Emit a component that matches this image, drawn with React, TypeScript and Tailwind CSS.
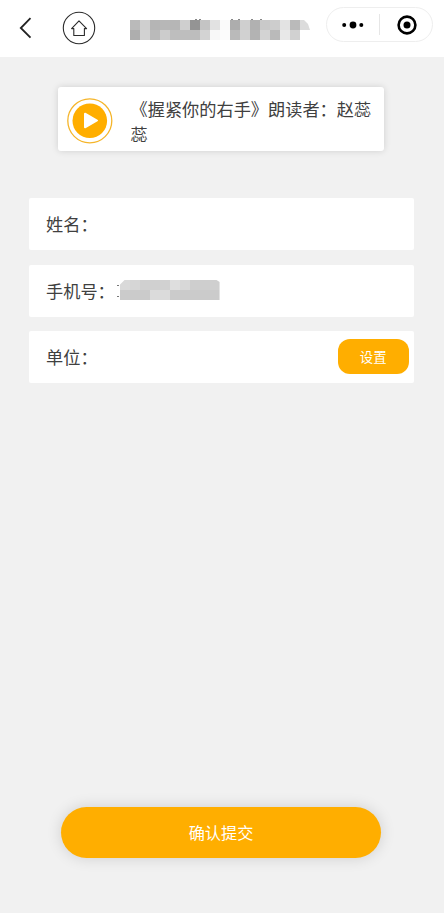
import React from 'react';
import clsx from 'clsx';

// Masked text is drawn as rows of 10px grey cells.
const TITLE_MASK = [
  ['#bababa', '#cfcfcf', '#b5b5b5', '#b7b7b7', '#b6b6b6', '#cfcfcf', '#949494', '#c4c4c4', '#e2e2e2', '#fafafa', '#adadad', '#cfcfcf', '#b1b1b1', '#c9c9c9', '#cdcdcd', '#e3e3e3', '#bababa', '#dcdcdc'],
  ['#aeaeae', '#d2d2d2', '#bababa', '#cccccc', '#bebebe', '#bebebe', '#bdbdbd', '#d3d3d3', '#f8f8f8', '#fcfcfc', '#bababa', '#d1d1d1', '#b3b3b3', '#d3d3d3', '#bababa', '#e8e8e8', '#d1d1d1', '#ffffff'],
];

const PHONE_MASK = [
  ['#d9d9d9', '#d6d6d6', '#d0d0d0', '#d0d0d0', '#d1d1d1', '#dedede', '#d8d8d8', '#cecece', '#cecece', '#cfcfcf'],
  ['#cbcbcb', '#cbcbcb', '#cbcbcb', '#dbdbdb', '#dbdbdb', '#cbcbcb', '#cbcbcb', '#cbcbcb', '#cbcbcb', '#cbcbcb'],
];

const Mosaic: React.FC<{ rows: string[][]; className?: string }> = ({ rows, className }) => (
  <div className={clsx('shrink-0 overflow-hidden', className)}>
    {rows.map((row, y) => (
      <div key={y} className="flex">
        {row.map((color, x) => (
          <span key={x} className="h-[10px] w-[10px] shrink-0" style={{ backgroundColor: color }} />
        ))}
      </div>
    ))}
  </div>
);

const Header: React.FC = () => (
  <header className="flex h-[57px] shrink-0 bg-white">
    <svg className="mt-[17px] ml-[19px] h-[22px] w-[13px]" viewBox="0 0 13 22" fill="none" stroke="#222" strokeWidth="1.8">
      <path d="M11.5 1.2 1.8 11l9.7 9.6" />
    </svg>
    <svg className="mt-[11px] ml-[30px] h-[34px] w-[34px]" viewBox="0 0 34 34" fill="none" stroke="#2b2b2b" strokeWidth="1.1">
      <circle cx="17" cy="17" r="15.7" />
      <path d="M11.8 17.6H9.6L17 9.8l7.6 7.8h-2.2v6.9H11.8z" strokeLinejoin="round" />
    </svg>
    <div className="relative mt-[20px] ml-[34px] h-[20px] w-[180px]">
      {/* Tips of the title's strokes that show above the mask */}
      <svg className="absolute -top-[1px] left-0 h-[2px] w-[180px]" viewBox="0 0 180 2" fill="#888">
        <path d="M65 0h2v1h-2zM69 0h2v1h-2zM101 0h2v1h-2zM108 0h2v1h-2zM121 0h2v1h-2zM130 0h2v1h-2z" />
      </svg>
      <Mosaic
        rows={TITLE_MASK}
        className="h-[20px] w-[180px] [clip-path:polygon(0_0,174px_0,178px_4px,180px_10px,180px_20px,0_20px)]"
      />
    </div>
    <div className="mt-[7px] ml-[16px] flex h-[35px] w-[107px] items-center rounded-full border border-[#eeeeee]">
      <svg className="ml-[15px] h-[8px] w-[22px]" viewBox="0 0 22 8" fill="#000">
        <circle cx="2.2" cy="4" r="2" />
        <circle cx="11" cy="4" r="3.4" />
        <circle cx="19.3" cy="4" r="2" />
      </svg>
      <span className="ml-[15px] h-[21px] w-px bg-[#e6e6e6]" />
      <svg className="ml-[17px] h-[20px] w-[20px]" viewBox="0 0 20 20">
        <circle cx="10" cy="10" r="8.4" fill="none" stroke="#000" strokeWidth="2.6" />
        <circle cx="10" cy="10" r="3.5" fill="#000" />
      </svg>
    </div>
  </header>
);

const PlayIcon: React.FC = () => (
  <svg className="h-[46px] w-[46px] shrink-0" viewBox="0 0 46 46">
    <circle cx="22.8" cy="22.8" r="22" fill="#fff" stroke="#f5b52a" strokeWidth="1.3" />
    <circle cx="22.8" cy="22.8" r="17.3" fill="#ffae00" />
    <path d="M18 15.7v13.6L30 22.5z" fill="#fff" stroke="#fff" strokeWidth="2" strokeLinejoin="round" />
  </svg>
);

const Field: React.FC<{ label: string; children?: React.ReactNode }> = ({ label, children }) => (
  <div className="flex h-[52px] items-center rounded-[2px] bg-white pl-[17px]">
    <span className="whitespace-nowrap">{label}</span>
    {children}
  </div>
);

const App: React.FC = () => (
  <div className="flex h-[913px] w-[444px] flex-col overflow-hidden bg-[#f1f1f1] font-['Noto_Sans_CJK_SC',sans-serif] text-[17.2px] text-[#404040]">
    <Header />

    <section className="mt-[30px] ml-[58px] flex h-[64px] w-[326px] items-start rounded-[3px] bg-white pl-[9px] shadow-[0_0_7px_rgba(0,0,0,0.14)]">
      <div className="mt-[11px]">
        <PlayIcon />
      </div>
      <p className="mt-[9px] ml-[17.5px] w-[246px] leading-[25px]">
        《握紧你的右手》朗读者：赵蕊
        <br />
        蕊
      </p>
    </section>

    <main className="mr-[30px] ml-[29px] mt-[47px] flex flex-col gap-[14.5px]">
      <Field label="姓名：" />
      <Field label="手机号：">
        <span className="ml-[2px] flex h-[20px] w-[2px] shrink-0 flex-col justify-between py-[4px]">
          <span className="h-px w-[2px] bg-[#777]" />
          <span className="h-px w-[2px] bg-[#777]" />
        </span>
        <Mosaic
          rows={PHONE_MASK}
          className="-mt-[1px] ml-[0.8px] h-[20px] w-[100px] [clip-path:polygon(0_5px,5px_0,97px_0,100px_2px,100px_20px,0_20px)]"
        />
      </Field>
      <Field label="单位：">
        <button
          type="button"
          className="-mt-[1px] mr-[5.5px] ml-auto h-[35px] w-[70.5px] rounded-[12px] bg-[#ffae00] text-[13.4px] text-white"
        >
          设置
        </button>
      </Field>
    </main>

    <button
      type="button"
      className="mt-auto mb-[55px] ml-[61px] h-[51px] w-[320px] shrink-0 rounded-full bg-[#ffae00] text-[16.2px] text-white shadow-[0_0_15px_rgba(0,0,0,0.14)]"
    >
      确认提交
    </button>
  </div>
);

export default App;
